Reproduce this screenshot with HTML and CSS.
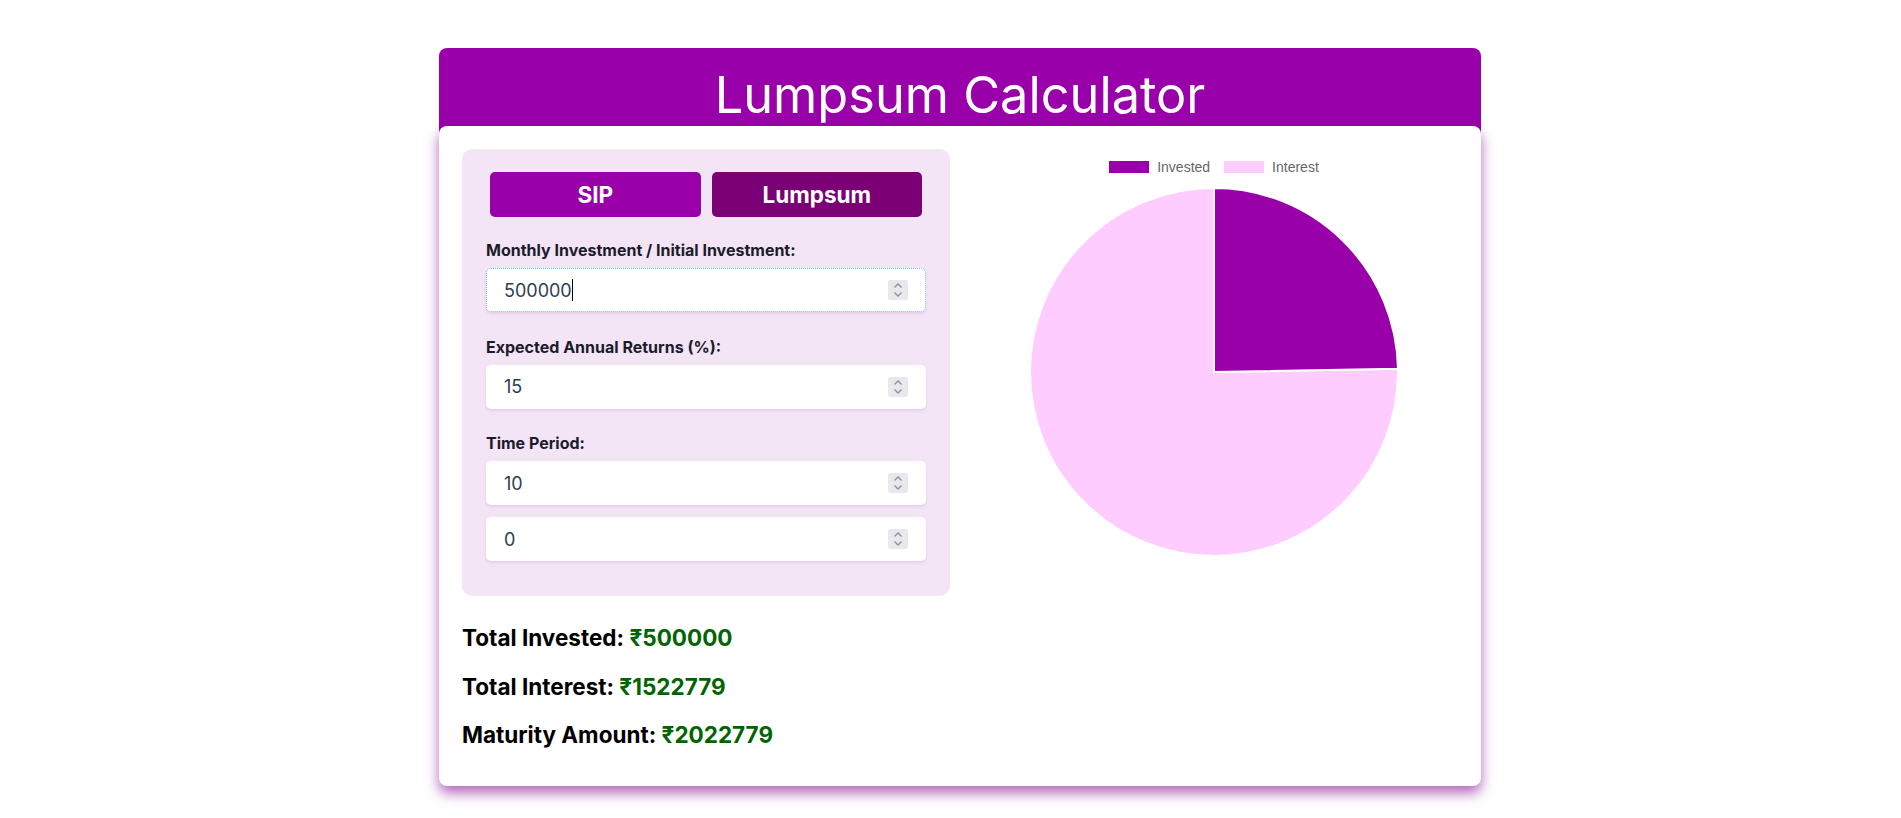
FILE: index.html
```html
<!DOCTYPE html>
<html>
<head>
    <title>Lumpsum Calculator</title>
    <link rel="stylesheet" href="styles.css">
</head>
<body>
    <div class="calculator">
        <div class="calc-header">
            <h1>Lumpsum Calculator</h1>
        </div>

        <div class="calc-card">
            <div class="left-col">
                <div class="input-panel">
                    <div class="mode-buttons">
                        <button class="mode-btn">SIP</button>
                        <button class="mode-btn active">Lumpsum</button>
                    </div>

                    <label class="field-label">Monthly Investment / Initial Investment:</label>
                    <div class="num-field focused">
                        <span class="value">500000<span class="caret"></span></span>
                        <span class="spinner">
                            <svg width="10" height="16" viewBox="0 0 10 16"><path d="M1.5 5.5 L5 2 L8.5 5.5 M1.5 10.5 L5 14 L8.5 10.5" fill="none" stroke="#8f8f9d" stroke-width="1.4"/></svg>
                        </span>
                    </div>

                    <label class="field-label">Expected Annual Returns (%):</label>
                    <div class="num-field">
                        <span class="value">15</span>
                        <span class="spinner">
                            <svg width="10" height="16" viewBox="0 0 10 16"><path d="M1.5 5.5 L5 2 L8.5 5.5 M1.5 10.5 L5 14 L8.5 10.5" fill="none" stroke="#8f8f9d" stroke-width="1.4"/></svg>
                        </span>
                    </div>

                    <label class="field-label">Time Period:</label>
                    <div class="num-field">
                        <span class="value">10</span>
                        <span class="spinner">
                            <svg width="10" height="16" viewBox="0 0 10 16"><path d="M1.5 5.5 L5 2 L8.5 5.5 M1.5 10.5 L5 14 L8.5 10.5" fill="none" stroke="#8f8f9d" stroke-width="1.4"/></svg>
                        </span>
                    </div>
                    <div class="num-field">
                        <span class="value">0</span>
                        <span class="spinner">
                            <svg width="10" height="16" viewBox="0 0 10 16"><path d="M1.5 5.5 L5 2 L8.5 5.5 M1.5 10.5 L5 14 L8.5 10.5" fill="none" stroke="#8f8f9d" stroke-width="1.4"/></svg>
                        </span>
                    </div>
                </div>

                <div class="results">
                    <p>Total Invested: <span class="amount">₹500000</span></p>
                    <p>Total Interest: <span class="amount">₹1522779</span></p>
                    <p>Maturity Amount: <span class="amount">₹2022779</span></p>
                </div>
            </div>

            <div class="chart-col">
                <div class="legend">
                    <div class="legend-item"><span class="legend-box invested"></span>Invested</div>
                    <div class="legend-item"><span class="legend-box interest"></span>Interest</div>
                </div>
                <!-- 500000 / 2022779 = 24.7% -->
                <svg class="pie" width="370" height="370" viewBox="0 0 370 370">
                    <path d="M185 185 L368.97 181.74 A184 184 0 1 1 185 1 Z" fill="#ffccff" stroke="#fff" stroke-width="2"/>
                    <path d="M185 185 L185 1 A184 184 0 0 1 368.97 181.74 Z" fill="#9900aa" stroke="#fff" stroke-width="2"/>
                </svg>
            </div>
        </div>
    </div>
</body>
</html>
```

FILE: styles.css
```css
/* ページ全体 */
body {
    margin: 0;
    padding: 48px 0 32px 19px;
    background: #fff;
    font-family: Inter, "Noto Sans", sans-serif;
}

.calculator {
    width: 1042px;
    margin: 0 auto;
}

.calc-header {
    background-color: #9900aa;
    border-radius: 8px 8px 0 0;
    padding: 17px 0 11px;
    text-align: center;
}

.calc-header h1 {
    margin: 0;
    color: #fff;
    font-size: 50.5px;
    font-weight: 400;
    line-height: 60px;
}

.calc-card {
    position: relative;
    margin-top: -10px;
    background: #fff;
    border-radius: 8px;
    box-shadow: 0 7px 13px rgba(128, 0, 140, 0.6);
    padding: 23px;
    display: grid;
    grid-template-columns: 1fr 1fr;
    gap: 20px;
}

/* 入力パネル */
.input-panel {
    background-color: #f3e5f5;
    border-radius: 10px;
    padding: 23px 24px 23px;
    display: flex;
    flex-direction: column;
}

.mode-buttons {
    display: flex;
    gap: 11px;
    padding: 0 4px;
    margin-bottom: 24px;
}

.mode-btn {
    flex: 1;
    height: 45px;
    border: none;
    border-radius: 5px;
    background-color: #9900aa;
    color: #fff;
    font-family: Inter, sans-serif;
    font-size: 22.5px;
    font-weight: 700;
    cursor: pointer;
}

.mode-btn.active {
    background-color: #7b0075;
}

.field-label {
    font-size: 16px;
    font-weight: 700;
    color: #1c1b2b;
    line-height: 19px;
    margin: 13.5px 0 8px;
}

.mode-buttons + .field-label {
    margin-top: 0;
}

.num-field {
    height: 44px;
    box-sizing: border-box;
    display: flex;
    align-items: center;
    background: #fff;
    border: 1px solid transparent;
    border-radius: 5px;
    box-shadow: 0 2px 3px rgba(120, 0, 140, 0.1);
    padding: 0 17px;
    margin-bottom: 12px;
}

.num-field.focused {
    border: 1px dotted #7cb8e8;
}

.num-field .value {
    flex: 1;
    display: flex;
    align-items: center;
    font-size: 18px;
    color: #2c3e50;
}

.caret {
    width: 1px;
    height: 22px;
    background: #000;
}

.spinner {
    width: 20px;
    height: 20px;
    border-radius: 2px;
    background: #e9e9ed;
    display: flex;
    align-items: center;
    justify-content: center;
}

/* 結果 */
.results {
    margin: 28px 0 15px;
}

.results p {
    margin: 21.5px 0 0;
    font-size: 22.5px;
    line-height: 27px;
    font-weight: 700;
    color: #000;
}

.results p:first-child {
    margin-top: 0;
}

.amount {
    color: #006400;
}

/* チャート */
.chart-col {
    display: flex;
    flex-direction: column;
    align-items: center;
    padding-top: 12px;
}

.legend {
    display: flex;
    gap: 14px;
    height: 12px;
    margin-bottom: 14px;
    font-family: "Liberation Sans", Arial, sans-serif;
    font-size: 14px;
    line-height: 12px;
    color: #666;
}

.legend-item {
    display: flex;
    align-items: center;
}

.legend-box {
    width: 40px;
    height: 12px;
    margin-right: 8px;
}

.legend-box.invested {
    background: #9900aa;
}

.legend-box.interest {
    background: #ffccff;
}

.pie {
    display: block;
}
```
